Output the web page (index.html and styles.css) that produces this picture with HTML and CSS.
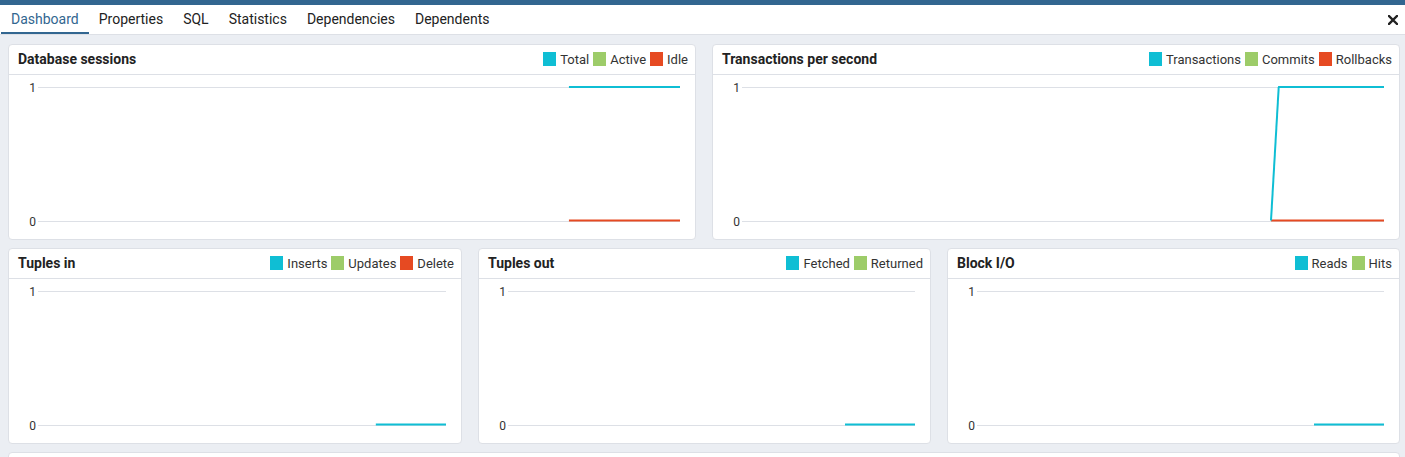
FILE: index.html
```html
<!DOCTYPE html>
<html lang="en">
<head>
<meta charset="utf-8">
<title>Dashboard</title>
<link rel="stylesheet" href="styles.css">
</head>
<body>
<div class="topbar"></div>
<div class="tabbar">
  <ul class="tabs">
    <li class="tab active">Dashboard</li>
    <li class="tab">Properties</li>
    <li class="tab">SQL</li>
    <li class="tab">Statistics</li>
    <li class="tab">Dependencies</li>
    <li class="tab">Dependents</li>
  </ul>
  <button class="close" aria-label="Close">
    <svg width="10" height="10" viewBox="0 0 10 10"><path d="M1 1 L9 9 M9 1 L1 9" stroke="#222" stroke-width="2.4" stroke-linecap="square" fill="none"/></svg>
  </button>
</div>

<div class="dashboard">
  <div class="row row-2">
    <section class="panel">
      <header class="panel-head">
        <h3 class="panel-title">Database sessions</h3>
        <ul class="legend">
          <li><span class="sw sw-cyan"></span>Total</li>
          <li><span class="sw sw-green"></span>Active</li>
          <li><span class="sw sw-red"></span>Idle</li>
        </ul>
      </header>
      <div class="panel-body">
        <svg class="plot">
          <line class="grid" x1="0" x2="100%" y1="0.5" y2="0.5"/>
          <line class="grid" x1="0" x2="100%" y1="134.5" y2="134.5"/>
          <text class="ylab" x="-2" y="0.5">1</text>
          <text class="ylab" x="-2" y="134.5">0</text>
          <line class="d-cyan" x1="82.7%" x2="100%" y1="0" y2="0"/>
          <line class="d-red" x1="82.7%" x2="100%" y1="133.5" y2="133.5"/>
        </svg>
      </div>
    </section>
    <section class="panel">
      <header class="panel-head">
        <h3 class="panel-title">Transactions per second</h3>
        <ul class="legend">
          <li><span class="sw sw-cyan"></span>Transactions</li>
          <li><span class="sw sw-green"></span>Commits</li>
          <li><span class="sw sw-red"></span>Rollbacks</li>
        </ul>
      </header>
      <div class="panel-body">
        <svg class="plot">
          <line class="grid" x1="0" x2="100%" y1="0.5" y2="0.5"/>
          <line class="grid" x1="0" x2="100%" y1="134.5" y2="134.5"/>
          <text class="ylab" x="-2" y="0.5">1</text>
          <text class="ylab" x="-2" y="134.5">0</text>
          <line class="d-red" x1="82.4%" x2="100%" y1="133.5" y2="133.5"/>
          <line class="d-cyan" x1="82.4%" x2="83.6%" y1="133.5" y2="0"/>
          <line class="d-cyan" x1="83.5%" x2="100%" y1="0" y2="0"/>
        </svg>
      </div>
    </section>
  </div>

  <div class="row row-3">
    <section class="panel">
      <header class="panel-head">
        <h3 class="panel-title">Tuples in</h3>
        <ul class="legend">
          <li><span class="sw sw-cyan"></span>Inserts</li>
          <li><span class="sw sw-green"></span>Updates</li>
          <li><span class="sw sw-red"></span>Delete</li>
        </ul>
      </header>
      <div class="panel-body">
        <svg class="plot">
          <line class="grid" x1="0" x2="100%" y1="0.5" y2="0.5"/>
          <line class="grid" x1="0" x2="100%" y1="134.5" y2="134.5"/>
          <text class="ylab" x="-2" y="0.5">1</text>
          <text class="ylab" x="-2" y="134.5">0</text>
          <line class="d-cyan" x1="82.8%" x2="100%" y1="133.5" y2="133.5"/>
        </svg>
      </div>
    </section>
    <section class="panel">
      <header class="panel-head">
        <h3 class="panel-title">Tuples out</h3>
        <ul class="legend">
          <li><span class="sw sw-cyan"></span>Fetched</li>
          <li><span class="sw sw-green"></span>Returned</li>
        </ul>
      </header>
      <div class="panel-body">
        <svg class="plot">
          <line class="grid" x1="0" x2="100%" y1="0.5" y2="0.5"/>
          <line class="grid" x1="0" x2="100%" y1="134.5" y2="134.5"/>
          <text class="ylab" x="-2" y="0.5">1</text>
          <text class="ylab" x="-2" y="134.5">0</text>
          <line class="d-cyan" x1="82.8%" x2="100%" y1="133.5" y2="133.5"/>
        </svg>
      </div>
    </section>
    <section class="panel">
      <header class="panel-head">
        <h3 class="panel-title">Block I/O</h3>
        <ul class="legend">
          <li><span class="sw sw-cyan"></span>Reads</li>
          <li><span class="sw sw-green"></span>Hits</li>
        </ul>
      </header>
      <div class="panel-body">
        <svg class="plot">
          <line class="grid" x1="0" x2="100%" y1="0.5" y2="0.5"/>
          <line class="grid" x1="0" x2="100%" y1="134.5" y2="134.5"/>
          <text class="ylab" x="-2" y="0.5">1</text>
          <text class="ylab" x="-2" y="134.5">0</text>
          <line class="d-cyan" x1="82.8%" x2="100%" y1="133.5" y2="133.5"/>
        </svg>
      </div>
    </section>
  </div>

  <div class="row row-1">
    <section class="panel"></section>
  </div>
</div>
</body>
</html>
```

FILE: styles.css
```css
* { box-sizing: border-box; }

html, body {
  margin: 0;
  padding: 0;
  height: 100%;
  overflow: hidden;
}

body {
  font-family: Roboto, "Liberation Sans", Arial, sans-serif;
  font-size: 14px;
  color: #222;
  background: #ebeef3;
}

.topbar {
  height: 5px;
  background: #326690;
}

.tabbar {
  display: flex;
  align-items: stretch;
  justify-content: space-between;
  height: 30px;
  background: #fff;
  border-bottom: 1px solid #dde0e6;
  padding: 0 7px 0 1px;
}

.tabs {
  display: flex;
  list-style: none;
  margin: 0;
  padding: 0;
}

.tab {
  padding: 1px 10px 0;
  line-height: 27px;
  height: 29px;
  border-bottom: 2px solid transparent;
  color: #222;
  white-space: nowrap;
}

.tab.active {
  color: #326690;
  border-bottom-color: #326690;
}

.close {
  border: 0;
  background: none;
  padding: 0;
  margin: 0;
  display: flex;
  align-items: center;
  cursor: pointer;
}

.close svg { display: block; margin-top: 1px; }

.dashboard {
  display: flex;
  flex-direction: column;
  gap: 8px;
  padding: 9px 5px 0 8px;
}

.row {
  display: grid;
  gap: 16px;
}

.row-2 { grid-template-columns: 1fr 1fr; }
.row-3 { grid-template-columns: 454fr 453fr 453fr; }
.row-1 { grid-template-columns: 1fr; }

.panel {
  background: #fff;
  border: 1px solid #dde0e6;
  border-radius: 4px;
  height: 196px;
  display: flex;
  flex-direction: column;
  overflow: hidden;
}

.panel-head {
  height: 30px;
  flex: none;
  display: flex;
  align-items: center;
  justify-content: space-between;
  border-bottom: 1px solid #dde0e6;
  padding: 0 7px 1px 9px;
}

.panel-title {
  margin: 0;
  font-size: 14px;
  font-weight: bold;
  color: #222;
  white-space: nowrap;
}

.legend {
  display: flex;
  gap: 4px;
  list-style: none;
  margin: 0;
  padding: 0;
  font-size: 13px;
  color: #333;
}

.legend li {
  display: flex;
  align-items: center;
  gap: 4px;
  white-space: nowrap;
}

.sw {
  display: inline-block;
  width: 13px;
  height: 14px;
}

.sw-cyan { background: #0fbed4; }
.sw-green { background: #9dcc69; }
.sw-red { background: #e64a22; }

.panel-body {
  flex: 1;
  min-height: 0;
  padding: 12px 15px 17px 29px;
}

.plot {
  display: block;
  width: 100%;
  height: 135px;
  overflow: visible;
}

.grid {
  stroke: #dde0e6;
  stroke-width: 1;
}

.ylab {
  font-family: Roboto, "Liberation Sans", Arial, sans-serif;
  font-size: 12px;
  fill: #333;
  text-anchor: end;
  dominant-baseline: central;
}

.d-cyan {
  stroke: #0fbed4;
  stroke-width: 2;
}

.d-red {
  stroke: #e64a22;
  stroke-width: 2;
}
```
